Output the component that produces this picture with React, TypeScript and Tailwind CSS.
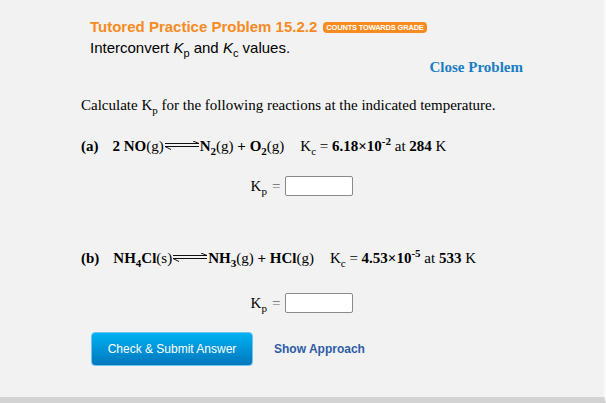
import React from "react";

const serif = "font-['Liberation_Serif',serif]";
const sans = "font-['Liberation_Sans',Arial,sans-serif]";

function Sub({ children }: { children: React.ReactNode }) {
  return <span className="relative top-[4px] text-[11px] leading-none">{children}</span>;
}

function Sup({ children }: { children: React.ReactNode }) {
  return <span className="relative top-[-6px] text-[11px] leading-none">{children}</span>;
}

// double harpoon equilibrium arrow
function EqArrow() {
  return (
    <svg width="36" height="10" viewBox="0 0 36 10" className="inline-block align-baseline">
      <line x1="1" y1="2.5" x2="35" y2="2.5" stroke="#111" strokeWidth="1" />
      <line x1="35" y1="2.5" x2="29" y2="0" stroke="#111" strokeWidth="1" />
      <line x1="1" y1="5.5" x2="35" y2="5.5" stroke="#111" strokeWidth="1" />
      <line x1="1" y1="5.5" x2="7" y2="8.5" stroke="#111" strokeWidth="1" />
    </svg>
  );
}

function AnswerRow() {
  return (
    <div className="flex items-center justify-center h-[20px]">
      <span className="text-[15px] leading-[20px] text-black">
        K<Sub>p</Sub>
      </span>
      <span className="ml-[5px] text-[15px] leading-[20px] text-[#666]">=</span>
      <input
        type="text"
        className="ml-[5px] w-[68px] h-[20px] border border-[#8a8a8a] rounded-[2px] bg-white outline-none"
      />
    </div>
  );
}

export default function App() {
  return (
    <div className="w-[606px] h-[403px] bg-[#f2f2f2] border-b-[6px] border-b-[#d3d3d3] border-r-2 border-r-[#fafafa] overflow-hidden">
      {/* header */}
      <div className={`pl-[90px] pt-[18px] ${sans}`}>
        <div className="flex items-center h-[18px]">
          <span className="text-[15px] leading-[18px] font-bold text-[#f68b1f]">
            Tutored Practice Problem 15.2.2
          </span>
          <span className="ml-[6px] h-[11px] px-[3px] rounded-[4px] bg-[#f68b1f] text-white text-[7.5px] leading-[11px] font-bold tracking-tight">
            COUNTS TOWARDS GRADE
          </span>
        </div>
        <div className="mt-[2px] text-[15px] leading-[20px] text-black">
          Interconvert <i>K</i>
          <Sub>p</Sub> and <i>K</i>
          <Sub>c</Sub> values.
        </div>
      </div>

      <div className={`mx-auto w-[442px] ${serif} text-black`}>
        <div className="-mt-[1px] flex justify-end">
          <span className="text-[15px] leading-[20px] font-bold text-[#1a7dc4]">Close Problem</span>
        </div>

        <p className="mt-[18px] text-[15px] leading-[20px]">
          Calculate K<Sub>p</Sub> for the following reactions at the indicated temperature.
        </p>

        {/* (a) */}
        <p className="mt-[21px] text-[15px] leading-[20px] whitespace-nowrap">
          <b>(a)</b>
          <span className="ml-[14px]" />
          <b>2 NO</b>(g)
          <EqArrow />
          <b>
            N<Sub>2</Sub>
          </b>
          (g) <b>+</b>{" "}
          <b>
            O<Sub>2</Sub>
          </b>
          (g)
          <span className="ml-[16px]" />
          K<Sub>c</Sub> = <b>6.18×10</b>
          <b>
            <Sup>-2</Sup>
          </b>{" "}
          at <b>284</b> K
        </p>

        <div className="mt-[20px]">
          <AnswerRow />
        </div>

        {/* (b) */}
        <p className="mt-[52px] text-[15px] leading-[20px] whitespace-nowrap">
          <b>(b)</b>
          <span className="ml-[14px]" />
          <b>
            NH<Sub>4</Sub>Cl
          </b>
          (s)
          <EqArrow />
          <b>
            NH<Sub>3</Sub>
          </b>
          (g) <b>+</b> <b>HCl</b>(g)
          <span className="ml-[16px]" />
          K<Sub>c</Sub> = <b>4.53×10</b>
          <b>
            <Sup>-5</Sup>
          </b>{" "}
          at <b>533</b> K
        </p>

        <div className="mt-[25px]">
          <AnswerRow />
        </div>

        {/* actions */}
        <div className={`mt-[19px] ml-[10px] flex items-center ${sans}`}>
          <button className="w-[162px] h-[34px] rounded-[4px] border border-[#6cc6ee] bg-gradient-to-b from-[#00b2f2] to-[#0077bd] text-white text-[12px]">
            Check &amp; Submit Answer
          </button>
          <span className="ml-[21px] text-[12px] font-bold text-[#2d5ca6]">Show Approach</span>
        </div>
      </div>
    </div>
  );
}
